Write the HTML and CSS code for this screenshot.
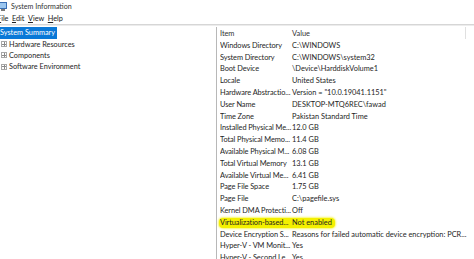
FILE: index.html
```html
<!DOCTYPE html>
<html>
<head>
<meta charset="utf-8">
<link rel="stylesheet" href="styles.css">
</head>
<body>
<div class="win">
  <div class="titlebar">
    <svg class="appicon" width="9" height="10" viewBox="0 0 9 10">
      <rect x="0" y="0" width="8" height="7" fill="#3a6fb5"/>
      <rect x="1" y="1" width="6" height="5" fill="#9cc7f0"/>
      <rect x="2" y="7" width="4" height="2" fill="#7a7a7a"/>
    </svg>
    <span class="title">System Information</span>
  </div>
  <div class="menubar">
    <span class="mi"><u>F</u>ile</span>
    <span class="mi"><u>E</u>dit</span>
    <span class="mi"><u>V</u>iew</span>
    <span class="mi"><u>H</u>elp</span>
  </div>
  <div class="main">
    <div class="tree">
      <div class="node sel">System Summary</div>
      <div class="node"><span class="plus"></span>Hardware Resources</div>
      <div class="node"><span class="plus"></span>Components</div>
      <div class="node"><span class="plus"></span>Software Environment</div>
    </div>
    <div class="list">
      <div class="row head"><span class="c1">Item</span><span class="c2">Value</span><span class="hdiv"></span></div>
      <div class="row"><span class="c1">Windows Directory</span><span class="c2">C:\WINDOWS</span></div>
      <div class="row"><span class="c1">System Directory</span><span class="c2">C:\WINDOWS\system32</span></div>
      <div class="row"><span class="c1">Boot Device</span><span class="c2">\Device\HarddiskVolume1</span></div>
      <div class="row"><span class="c1">Locale</span><span class="c2">United States</span></div>
      <div class="row"><span class="c1">Hardware Abstractio...</span><span class="c2">Version = "10.0.19041.1151"</span></div>
      <div class="row"><span class="c1">User Name</span><span class="c2">DESKTOP-MTQ6REC\fawad</span></div>
      <div class="row"><span class="c1">Time Zone</span><span class="c2">Pakistan Standard Time</span></div>
      <div class="row"><span class="c1">Installed Physical Me...</span><span class="c2">12.0 GB</span></div>
      <div class="row"><span class="c1">Total Physical Memo...</span><span class="c2">11.4 GB</span></div>
      <div class="row"><span class="c1">Available Physical M...</span><span class="c2">6.08 GB</span></div>
      <div class="row"><span class="c1">Total Virtual Memory</span><span class="c2">13.1 GB</span></div>
      <div class="row"><span class="c1">Available Virtual Me...</span><span class="c2">6.41 GB</span></div>
      <div class="row"><span class="c1">Page File Space</span><span class="c2">1.75 GB</span></div>
      <div class="row"><span class="c1">Page File</span><span class="c2">C:\pagefile.sys</span></div>
      <div class="row"><span class="c1">Kernel DMA Protecti...</span><span class="c2">Off</span></div>
      <div class="row hl"><span class="mark"></span><span class="c1">Virtualization-based...</span><span class="c2">Not enabled</span></div>
      <div class="row"><span class="c1">Device Encryption S...</span><span class="c2">Reasons for failed automatic device encryption: PCR...</span></div>
      <div class="row"><span class="c1">Hyper-V - VM Monit...</span><span class="c2">Yes</span></div>
      <div class="row"><span class="c1">Hyper-V - Second Le...</span><span class="c2">Yes</span></div>
    </div>
  </div>
</div>
</body>
</html>
```
FILE: styles.css
```css
html, body {
  margin: 0;
  padding: 0;
  background: #ffffff;
}
body {
  font-family: Lato, "Noto Sans", sans-serif;
  font-size: 7.4px;
  color: #1e1e1e;
  overflow: hidden;
  width: 474px;
  height: 259px;
}
.win {
  display: flex;
  flex-direction: column;
  height: 259px;
}
.titlebar {
  height: 13px;
  display: flex;
  align-items: center;
  gap: 3px;
  margin-left: -1px;
}
.appicon { display: block; }
.title {
  font-size: 7.1px;
  color: #333;
}
.menubar {
  height: 11px;
  display: flex;
  align-items: center;
  gap: 3.5px;
  margin-left: -3px;
  font-size: 7.3px;
  color: #222;
}
.mi u { text-decoration-thickness: 0.5px; text-underline-offset: 1px; }
.main {
  flex: 1;
  display: grid;
  grid-template-columns: 217px 1fr;
  border-top: 1px solid #d6d6d6;
  box-shadow: inset 0 1px 0 #ececec;
  padding-top: 2px;
  min-height: 0;
}
.tree {
  border-right: 1px solid #b8b8b8;
  font-size: 7.3px;
}
.node {
  height: 11.3px;
  line-height: 11.3px;
  display: flex;
  align-items: center;
  white-space: nowrap;
}
.node.sel {
  background: #0a78d7;
  color: #fff;
  width: 57px;
  height: 12px;
  line-height: 12px;
  margin-bottom: -0.5px;
}
.plus {
  width: 4px;
  height: 4px;
  border: 1px solid #a8a8a8;
  margin: 0 2px 0 1px;
  position: relative;
  box-sizing: content-box;
}
.plus::before {
  content: "";
  position: absolute;
  left: 0; right: 0; top: 1.5px;
  height: 1px;
  background: #8a8a8a;
}
.plus::after {
  content: "";
  position: absolute;
  top: 0; bottom: 0; left: 1.5px;
  width: 1px;
  background: #8a8a8a;
}
.list {
  padding-left: 3px;
  padding-top: 1px;
  overflow: hidden;
}
.row {
  height: 11.8px;
  line-height: 11.8px;
  display: flex;
  white-space: nowrap;
  position: relative;
}
.c1 {
  width: 72px;
  flex: none;
  overflow: hidden;
  position: relative;
  letter-spacing: -0.08px;
}
.c2 {
  flex: none;
  position: relative;
}
.head {
  color: #333;
}
.hdiv {
  position: absolute;
  left: 245px;
  top: -3px;
  height: 14px;
  width: 1px;
  background: #e0e0e0;
}
.mark {
  position: absolute;
  left: -1px;
  top: 1px;
  width: 116px;
  height: 10px;
  background: #f4f000;
  border-radius: 4px;
  box-shadow: 0 0 2px 1px rgba(244, 240, 0, 0.6);
}
```
